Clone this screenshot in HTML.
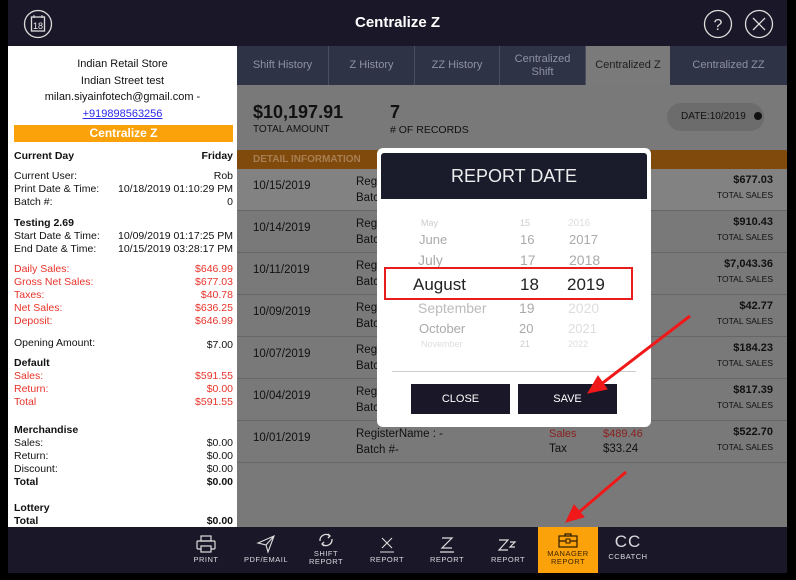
<!DOCTYPE html>
<html><head><meta charset="utf-8"><style>
*{margin:0;padding:0;box-sizing:border-box}
body{width:796px;height:580px;background:#000;position:relative;overflow:hidden;font-family:"Liberation Sans",sans-serif}
.a{position:absolute;white-space:nowrap}
.hdr{left:8px;top:0;width:779px;height:46px;background:#1a1828}
.left{left:8px;top:46px;width:229px;height:481px;background:#fff;font-size:10.5px;color:#111}
.right{left:237px;top:46px;width:550px;height:481px;background:#797979}
.tab{top:0;height:39px;background:#2e3346;color:#8e93a0;font-size:11px;text-align:center;display:flex;align-items:center;justify-content:center;line-height:13px;border-right:1px solid #4a4f60}
.l{left:6px}.r{right:4px;text-align:right}
.red{color:#e8332a}
.b{font-weight:bold}
.row{left:0;width:550px;height:42px;border-bottom:1px solid #666}
.bar{left:8px;top:527px;width:779px;height:46px;background:#1a1828}
.it{top:0;width:60px;height:46px;text-align:center;color:#d8d8de;font-size:7.5px;letter-spacing:.5px;line-height:8px}
.it svg{display:block;margin:7px auto 2px}
</style></head><body>
<div class="a hdr">
 <svg class="a" style="left:15px;top:9px" width="30" height="30" viewBox="0 0 30 30"><circle cx="15" cy="15" r="13.5" fill="none" stroke="#ddd" stroke-width="1.3"/><rect x="8.5" y="8" width="13" height="14" fill="none" stroke="#ddd" stroke-width="1.3"/><line x1="11" y1="6" x2="11" y2="9" stroke="#ddd"/><line x1="19" y1="6" x2="19" y2="9" stroke="#ddd"/><text x="15" y="20" font-size="9" fill="#eee" text-anchor="middle" font-family="Liberation Sans">18</text></svg>
 <div class="a" style="left:0;width:779px;top:14px;text-align:center;color:#fff;font-size:15px;font-weight:bold">Centralize Z</div>
 <svg class="a" style="left:695px;top:9px" width="30" height="30"><circle cx="15" cy="15" r="13.5" fill="none" stroke="#ddd" stroke-width="1.3"/><text x="15" y="21" font-size="16" fill="#ddd" text-anchor="middle" font-family="Liberation Sans">?</text></svg>
 <svg class="a" style="left:736px;top:9px" width="30" height="30"><circle cx="15" cy="15" r="13.5" fill="none" stroke="#ddd" stroke-width="1.3"/><path d="M9 9L21 21M21 9L9 21" stroke="#ddd" stroke-width="1.3"/></svg>
</div>
<div class="a left">
 <div class="a" style="left:0;width:229px;top:10px;text-align:center;line-height:16.5px;font-size:11px">Indian Retail Store<br>Indian Street test<br>milan.siyainfotech@gmail.com -<br><span style="color:#2a2ae8;text-decoration:underline;line-height:12px">+919898563256</span></div>
 <div class="a" style="left:6px;top:79px;width:219px;height:17px;background:#fba20a;color:#fff;font-weight:bold;font-size:12px;text-align:center;line-height:17px">Centralize Z</div>
 <div class="a l b" style="top:104px">Current Day</div><div class="a r b" style="top:104px">Friday</div>
 <div class="a l" style="top:124px">Current User:</div><div class="a r" style="top:124px">Rob</div>
 <div class="a l" style="top:137px">Print Date &amp; Time:</div><div class="a r" style="top:137px">10/18/2019 01:10:29 PM</div>
 <div class="a l" style="top:150px">Batch #:</div><div class="a r" style="top:150px">0</div>
 <div class="a l b" style="top:171px">Testing 2.69</div>
 <div class="a l" style="top:184px">Start Date &amp; Time:</div><div class="a r" style="top:184px">10/09/2019 01:17:25 PM</div>
 <div class="a l" style="top:197px">End Date &amp; Time:</div><div class="a r" style="top:197px">10/15/2019 03:28:17 PM</div>
 <div class="a l red" style="top:217px">Daily Sales:</div><div class="a r red" style="top:217px">$646.99</div>
 <div class="a l red" style="top:230px">Gross Net Sales:</div><div class="a r red" style="top:230px">$677.03</div>
 <div class="a l red" style="top:243px">Taxes:</div><div class="a r red" style="top:243px">$40.78</div>
 <div class="a l red" style="top:256px">Net Sales:</div><div class="a r red" style="top:256px">$636.25</div>
 <div class="a l red" style="top:269px">Deposit:</div><div class="a r red" style="top:269px">$646.99</div>
 <div class="a l" style="top:291px">Opening Amount:</div><div class="a r" style="top:293px">$7.00</div>
 <div class="a l b" style="top:311px">Default</div>
 <div class="a l red" style="top:324px">Sales:</div><div class="a r red" style="top:324px">$591.55</div>
 <div class="a l red" style="top:337px">Return:</div><div class="a r red" style="top:337px">$0.00</div>
 <div class="a l red" style="top:350px">Total</div><div class="a r red" style="top:350px">$591.55</div>
 <div class="a l b" style="top:378px">Merchandise</div>
 <div class="a l" style="top:391px">Sales:</div><div class="a r" style="top:391px">$0.00</div>
 <div class="a l" style="top:404px">Return:</div><div class="a r" style="top:404px">$0.00</div>
 <div class="a l" style="top:417px">Discount:</div><div class="a r" style="top:417px">$0.00</div>
 <div class="a l b" style="top:430px">Total</div><div class="a r b" style="top:430px">$0.00</div>
 <div class="a l b" style="top:456px">Lottery</div>
 <div class="a l b" style="top:469px">Total</div><div class="a r b" style="top:469px">$0.00</div>
</div>
<div class="a right">
 <div class="a tab" style="left:0;width:92px">Shift History</div>
 <div class="a tab" style="left:92px;width:86px">Z History</div>
 <div class="a tab" style="left:178px;width:85px">ZZ History</div>
 <div class="a tab" style="left:263px;width:86px">Centralized<br>Shift</div>
 <div class="a tab" style="left:349px;width:84px;background:#7a7a7a;color:#1e1e1e;border:none">Centralized Z</div>
 <div class="a tab" style="left:433px;width:117px;border:none">Centralized ZZ</div>
 <div class="a" style="left:16px;top:56px;font-size:18px;font-weight:bold;color:#111">$10,197.91</div>
 <div class="a" style="left:16px;top:78px;font-size:10px;color:#111">TOTAL AMOUNT</div>
 <div class="a" style="left:153px;top:56px;font-size:18px;font-weight:bold;color:#111">7</div>
 <div class="a" style="left:153px;top:78px;font-size:10.5px;color:#111">#&nbsp;OF RECORDS</div>
 <div class="a" style="left:430px;top:57px;width:97px;height:28px;border-radius:14px;background:#6c6c6c;font-size:10px;color:#111;line-height:28px;padding-left:14px">DATE:10/2019 <span style="display:inline-block;width:8px;height:8px;border-radius:50%;background:#111;margin-left:5px;vertical-align:-1px"></span></div>
 <div class="a" style="left:0;top:104px;width:550px;height:19px;background:#7f4a0b;color:#a87e52;font-size:10px;line-height:19px;padding-left:16px;font-weight:bold">DETAIL INFORMATION</div>
 <div class="a" style="left:0;top:123px;width:550px;height:42px;background:#828282"></div>
 <div id="rows"></div>
</div>
<script>
var d=[["10/15/2019","$677.03"],["10/14/2019","$910.43"],["10/11/2019","$7,043.36"],["10/09/2019","$42.77"],["10/07/2019","$184.23"],["10/04/2019","$817.39"],["10/01/2019","$522.70"]];
var h="";d.forEach(function(r,i){var t=123+i*42;
h+='<div class="a row" style="top:'+t+'px"></div><div class="a" style="left:16px;top:'+(t+11)+'px;font-size:11.5px;color:#111">'+r[0]+'</div>'
+'<div class="a" style="left:119px;top:'+(t+5)+'px;font-size:11.5px;color:#111;line-height:16px">'+(i==6?'RegisterName : -<br>Batch #-':'Regi<br>Batc')+'</div>'
+'<div class="a" style="right:14px;top:'+(t+5)+'px;font-size:11px;font-weight:bold;color:#111;text-align:right">'+r[1]+'</div>'
+'<div class="a" style="right:14px;top:'+(t+21)+'px;font-size:8.5px;color:#111">TOTAL SALES</div>';});
h+='<div class="a" style="left:312px;top:382px;font-size:11px;color:#8a1f1f">Sales</div><div class="a" style="left:366px;top:382px;font-size:11px;color:#8a1f1f">$489.46</div><div class="a" style="left:312px;top:397px;font-size:11.5px;color:#111">Tax</div><div class="a" style="left:366px;top:397px;font-size:11.5px;color:#111">$33.24</div>';
document.getElementById("rows").innerHTML=h;
</script>
<div class="a" style="left:377px;top:148px;width:274px;height:279px;background:#fff;border-radius:6px"></div>
<div class="a" style="left:381px;top:153px;width:266px;height:46px;background:#1a1b2b;border-radius:3px 3px 0 0;color:#eee;font-size:18px;text-align:center;line-height:46px;font-weight:300">REPORT DATE</div>
<div class="a" style="left:381px;top:210px;width:266px;height:140px;font-size:13px">
 <div class="a" style="left:40px;top:8px;font-size:9px;color:#ccc">May</div><div class="a" style="left:139px;top:8px;font-size:9px;color:#ccc">15</div><div class="a" style="left:187px;top:8px;font-size:10px;color:#ddd">2016</div>
 <div class="a" style="left:38px;top:22px;color:#aaa">June</div><div class="a" style="left:139px;top:22px;color:#aaa">16</div><div class="a" style="left:188px;top:22px;color:#aaa">2017</div>
 <div class="a" style="left:37px;top:42px;color:#aaa;font-size:14px">July</div><div class="a" style="left:139px;top:42px;color:#aaa;font-size:14px">17</div><div class="a" style="left:188px;top:42px;color:#aaa;font-size:14px">2018</div>
 <div class="a" style="left:32px;top:65px;color:#222;font-size:17px">August</div><div class="a" style="left:139px;top:65px;color:#222;font-size:17px">18</div><div class="a" style="left:186px;top:65px;color:#222;font-size:17px">2019</div>
 <div class="a" style="left:37px;top:90px;color:#bbb;font-size:14px">September</div><div class="a" style="left:138px;top:90px;color:#aaa;font-size:14px">19</div><div class="a" style="left:187px;top:90px;color:#ddd;font-size:14px">2020</div>
 <div class="a" style="left:38px;top:111px;color:#aaa">October</div><div class="a" style="left:138px;top:111px;color:#aaa">20</div><div class="a" style="left:187px;top:111px;color:#ddd">2021</div>
 <div class="a" style="left:40px;top:129px;font-size:9px;color:#ddd">November</div><div class="a" style="left:139px;top:129px;font-size:9px;color:#ccc">21</div><div class="a" style="left:187px;top:129px;font-size:9px;color:#ddd">2022</div>
</div>
<div class="a" style="left:384px;top:267px;width:249px;height:33px;border:2.5px solid #e81c1c"></div>
<div class="a" style="left:392px;top:371px;width:244px;height:1px;background:#ccc"></div>
<div class="a" style="left:411px;top:384px;width:99px;height:30px;background:#1a1828;color:#fff;font-size:11px;text-align:center;line-height:30px">CLOSE</div>
<div class="a" style="left:518px;top:384px;width:99px;height:30px;background:#1a1828;color:#fff;font-size:11px;text-align:center;line-height:30px">SAVE</div>
<div class="a bar">
 <div class="a it" style="left:168px"><svg width="22" height="20"><rect x="6" y="2" width="10" height="5" fill="none" stroke="#ddd" stroke-width="1.2"/><rect x="2" y="7" width="18" height="8" rx="1" fill="none" stroke="#ddd" stroke-width="1.2"/><rect x="6" y="12" width="10" height="6" fill="#1a1828" stroke="#ddd" stroke-width="1.2"/></svg>PRINT</div>
 <div class="a it" style="left:228px"><svg width="22" height="20"><path d="M3 9L19 2L13 18L11 11Z M11 11L19 2" fill="none" stroke="#ddd" stroke-width="1.1"/></svg>PDF/EMAIL</div>
 <div class="a it" style="left:288px"><svg width="22" height="16" style="margin-top:5px"><path d="M5 9A6 6 0 0 1 15 4M17 7A6 6 0 0 1 7 12M13 2L15 4L13 6M9 10L7 12L9 14" fill="none" stroke="#ddd" stroke-width="1.3"/></svg>SHIFT<br>REPORT</div>
 <div class="a it" style="left:349px"><svg width="22" height="20"><path d="M6 4L16 14M16 4L6 14M4 18H18" stroke="#ddd" stroke-width="1.1"/></svg>REPORT</div>
 <div class="a it" style="left:409px"><svg width="22" height="20"><path d="M6 4H16L6 14H16M4 18H18" fill="none" stroke="#ddd" stroke-width="1.2"/></svg>REPORT</div>
 <div class="a it" style="left:470px"><svg width="22" height="20"><path d="M2 6H11L2 16H11M13 8H18L13 13H18" fill="none" stroke="#ddd" stroke-width="1.2"/></svg>REPORT</div>
 <div class="a it" style="left:530px;background:#fba20a;color:#3a2500;line-height:8px"><svg width="22" height="16" style="margin-top:5px"><rect x="2" y="4" width="18" height="11" fill="none" stroke="#2a1a00" stroke-width="1.2"/><path d="M8 4V2H14V4M2 9H20" stroke="#2a1a00" stroke-width="1.2" fill="none"/><rect x="9" y="7" width="4" height="4" fill="#fba20a" stroke="#2a1a00"/></svg>MANAGER<br>REPORT</div>
 <div class="a it" style="left:590px"><div style="font-size:17px;letter-spacing:1px;margin:6px 0 3px;font-weight:300;line-height:17px">CC</div>CCBATCH</div>
</div>
<svg class="a" style="left:0;top:0" width="796" height="580"><g stroke="#f01818" stroke-width="3" fill="#f01818"><line x1="690" y1="316" x2="600" y2="385"/><polygon points="588,393 598,376 607,389" stroke-width="1"/><line x1="626" y1="472" x2="578" y2="513"/><polygon points="566,522 574,505 584,517" stroke-width="1"/></g></svg>
</body></html>
